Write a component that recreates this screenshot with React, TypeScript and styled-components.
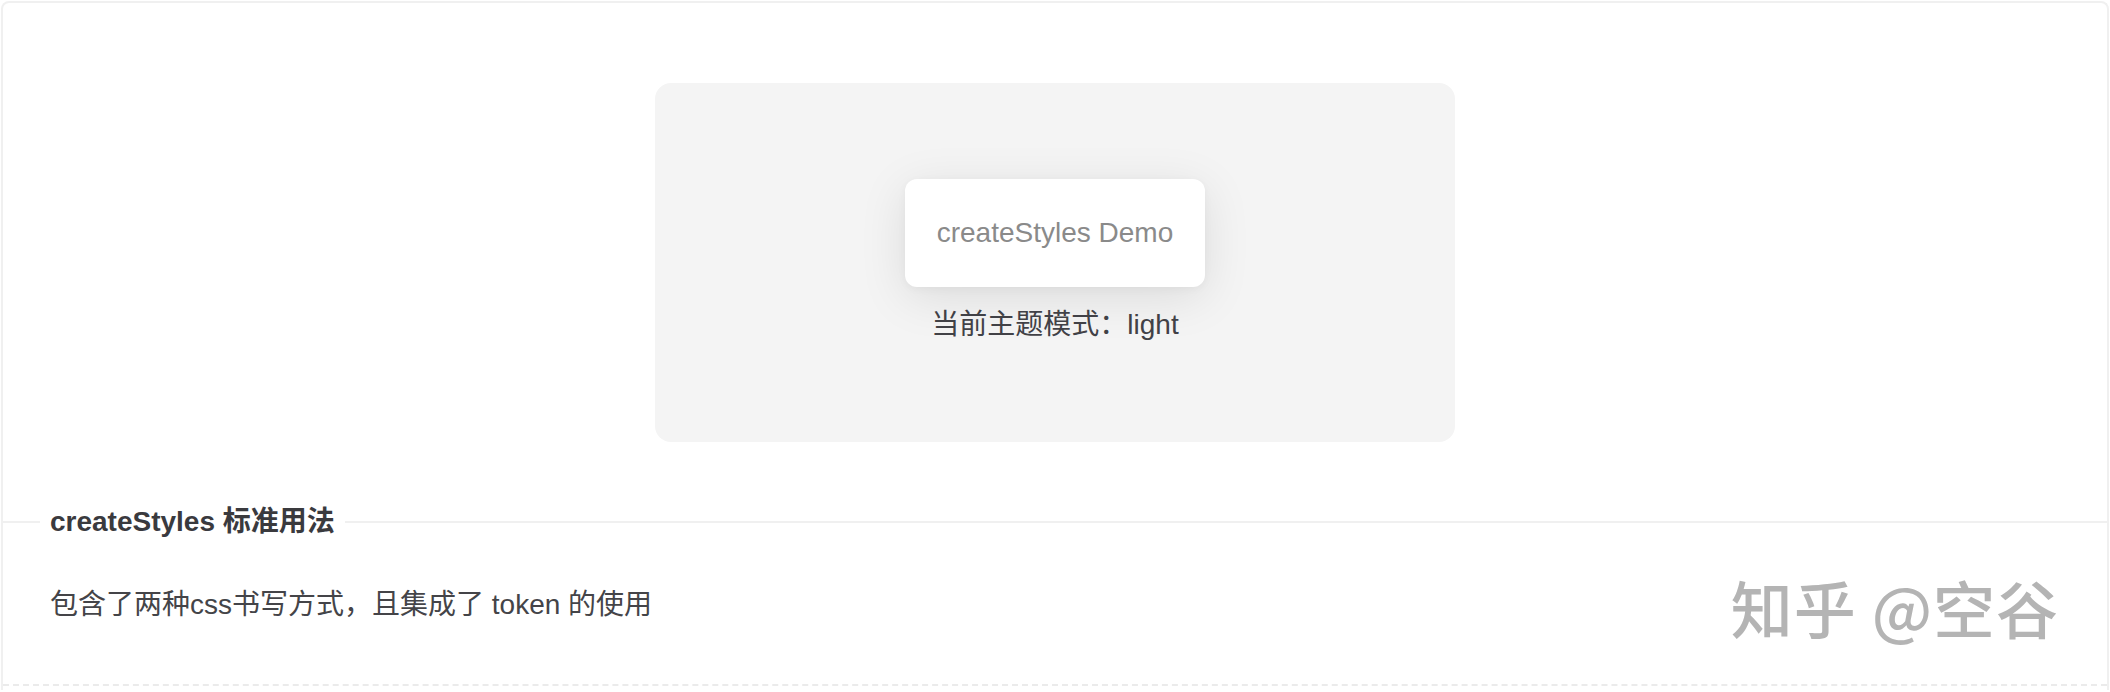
import styled, { createGlobalStyle } from 'styled-components';

const GlobalStyle = createGlobalStyle`
    html, body {
        margin: 0;
        padding: 0;
        background: #ffffff;
    }
    body {
        font-family: 'Liberation Sans', 'Noto Sans CJK SC', sans-serif;
        -webkit-font-smoothing: antialiased;
    }
`;

export default function App() {
    return (
        <Page>
            <GlobalStyle />
            <PreviewCard>
                <DemoArea>
                    <DemoBox>
                        <DemoButton>createStyles Demo</DemoButton>
                        <ModeText>当前主题模式：light</ModeText>
                    </DemoBox>
                </DemoArea>
                <Meta>
                    <DividerRow>
                        <DividerLine $width='37px' />
                        <MetaTitle>createStyles 标准用法</MetaTitle>
                        <DividerLine />
                    </DividerRow>
                    <Description>包含了两种css书写方式，且集成了 token 的使用</Description>
                    <Watermark>知乎 @空谷</Watermark>
                </Meta>
                <ActionBar />
            </PreviewCard>
        </Page>
    );
}

const Page = styled.div`
    padding: 1px 1px 0;
`;

const PreviewCard = styled.section`
    border: 2px solid #f0f0f0;
    border-bottom: none;
    border-radius: 8px 8px 0 0;
    background: #ffffff;
`;

const DemoArea = styled.div`
    display: flex;
    justify-content: center;
    align-items: center;
    padding: 80px 0 80px;
`;

const DemoBox = styled.div`
    width: 800px;
    height: 359px;
    display: flex;
    flex-direction: column;
    align-items: center;
    justify-content: center;
    background: #f4f4f4;
    border-radius: 16px;
`;

const DemoButton = styled.div`
    padding: 32px;
    background: #ffffff;
    border-radius: 12px;
    font-size: 28px;
    line-height: 44px;
    color: #8a8a8a;
    box-shadow: 0 10px 48px rgba(0, 0, 0, 0.1), 0 2px 8px rgba(0, 0, 0, 0.04);
`;

const ModeText = styled.div`
    margin-top: 16px;
    font-size: 28px;
    line-height: 44px;
    color: #414146;
`;

const Meta = styled.div`
    position: relative;
    display: flex;
    flex-direction: column;
    height: 162px;
`;

const DividerRow = styled.div`
    display: flex;
    align-items: center;
    height: 40px;
    margin-top: -20px;
`;

const DividerLine = styled.div<{ $width?: string }>`
    height: 2px;
    background: #f0f0f0;
    flex: ${(p) => (p.$width ? `0 0 ${p.$width}` : '1')};
`;

const MetaTitle = styled.div`
    padding: 0 10px;
    font-size: 28px;
    font-weight: 700;
    line-height: 40px;
    color: #3a3a3e;
    white-space: nowrap;
`;

const Description = styled.p`
    margin: 41px 0 0;
    padding: 0 47px;
    font-size: 28px;
    line-height: 44px;
    color: #444448;
`;

const Watermark = styled.div`
    position: absolute;
    top: 54px;
    right: 48px;
    font-family: 'Noto Sans CJK SC', sans-serif;
    font-size: 62px;
    font-weight: 500;
    line-height: 1;
    color: #b4b4b4;
    text-shadow: 2px 2px 0 rgba(255, 255, 255, 0.9);
    letter-spacing: 1px;
`;

const ActionBar = styled.div`
    height: 4px;
    border-top: 2px dashed #ebebeb;
`;
